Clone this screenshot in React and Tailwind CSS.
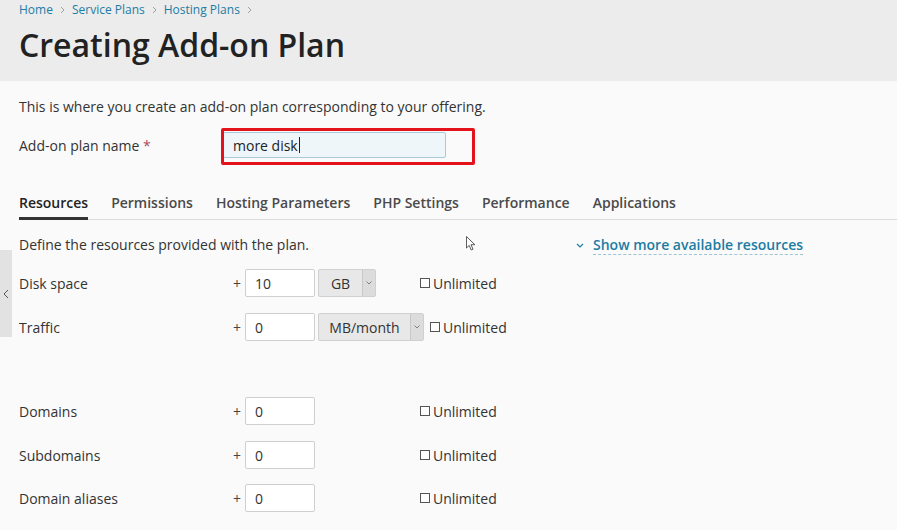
import React from "react";

const font = { fontFamily: '"Open Sans", "Liberation Sans", sans-serif' };

const Unlimited = () => (
  <label className="flex items-center gap-[3px] text-[14px] text-[#333]">
    <span className="inline-block w-[10px] h-[10px] border border-[#555] bg-white" />
    Unlimited
  </label>
);

const Select = ({ value, width }) => (
  <div className={`flex h-[28px] ${width} border border-[#d0d0d0] rounded-[2px] bg-[#e8e8e8]`}>
    <div className="flex-1 flex items-center justify-center text-[14px] text-[#333]">{value}</div>
    <div className="w-[13px] flex items-center justify-center border-l border-[#c8c8c8] bg-[#dcdcdc]">
      <svg width="6" height="4" viewBox="0 0 6 4">
        <path d="M0.5 0.5 L3 3 L5.5 0.5" fill="none" stroke="#777" strokeWidth="0.9" />
      </svg>
    </div>
  </div>
);

const Row = ({ label, value, select, className = "" }) => (
  <div className={`flex items-center h-[28px] ${className}`}>
    <div className="w-[214px] text-[14px] text-[#333]">{label}</div>
    <div className="flex items-center min-w-[181px]">
      <span className="w-[12px] text-[14px] text-[#444]">+</span>
      <div className="w-[70px] h-[28px] bg-white border border-[#cfcfcf] rounded-[2px] flex items-center pl-[9px] text-[14px] text-[#333]">
        {value}
      </div>
      {select && <div className="ml-[3px]">{select}</div>}
    </div>
    <div className="ml-[6px]">
      <Unlimited />
    </div>
  </div>
);

const tabs = ["Resources", "Permissions", "Hosting Parameters", "PHP Settings", "Performance", "Applications"];

const Sep = () => (
  <svg width="5" height="8" viewBox="0 0 5 8" className="mx-[7px]">
    <path d="M1 1 L4 4 L1 7" fill="none" stroke="#999" strokeWidth="0.9" />
  </svg>
);

export default function App() {
  return (
    <div style={font} className="relative w-[897px] h-[530px] overflow-hidden bg-[#fafafa]">
      <header className="h-[81px] bg-[#ececec] px-[19px] pt-[1px]">
        <nav className="flex items-center text-[12px] text-[#1d7ca3] leading-[18px]">
          <span>Home</span>
          <Sep />
          <span>Service Plans</span>
          <Sep />
          <span>Hosting Plans</span>
          <Sep />
        </nav>
        <h1 className="mt-[7px] text-[32px] leading-[38px] font-semibold text-[#222]">Creating Add-on Plan</h1>
      </header>

      <main className="px-[19px]">
        <p className="mt-[16px] text-[14px] leading-[20px] text-[#333]">
          This is where you create an add-on plan corresponding to your offering.
        </p>

        <div className="mt-[15px] flex items-center h-[26px]">
          <div className="w-[204px] text-[14px] text-[#333]">
            Add-on plan name <span className="text-[#b0495a]">*</span>
          </div>
          <div className="relative">
            <div className="w-[223px] h-[26px] bg-[#eef6fa] border border-[#a9cad8] rounded-[2px] flex items-center pl-[9px] text-[14px] text-[#222]">
              more disk<span className="inline-block w-[1px] h-[16px] bg-[#222] ml-[1px]" />
            </div>
            <div className="absolute -left-[2px] -top-[4px] w-[254px] h-[37px] border-[3px] border-[#e3121b] rounded-[2px]" />
          </div>
        </div>

        <div className="mt-[35px] -mr-[19px] flex gap-[23px] border-b border-[#dcdcdc] text-[14px] leading-[20px]">
          {tabs.map((t, i) => (
            <div
              key={t}
              className={`pb-[4px] border-b-[3px] -mb-px font-semibold ${
                i === 0 ? "border-[#333] text-[#222]" : "border-transparent text-[#4a4a4a]"
              }`}
            >
              {t}
            </div>
          ))}
        </div>

        <div className="mt-[15px] flex items-center text-[14px] leading-[20px]">
          <span className="text-[#333] w-[557px]">Define the resources provided with the plan.</span>
          <svg width="8" height="5" viewBox="0 0 8 5" className="mr-[9px]">
            <path d="M1 1 L4 4 L7 1" fill="none" stroke="#1d7ca3" strokeWidth="1.2" />
          </svg>
          <span className="text-[#1d7ca3] font-semibold border-b border-dashed border-[#9cc4d4] leading-[18px]">
            Show more available resources
          </span>
        </div>

        <div className="mt-[14px]">
          <Row label="Disk space" value="10" select={<Select value="GB" width="w-[58px]" />} />
          <Row label="Traffic" value="0" select={<Select value="MB/month" width="w-[106px]" />} className="mt-[16px]" />
          <Row label="Domains" value="0" className="mt-[56px]" />
          <Row label="Subdomains" value="0" className="mt-[16px]" />
          <Row label="Domain aliases" value="0" className="mt-[15px]" />
        </div>
      </main>

      <div className="absolute left-0 top-[250px] w-[12px] h-[87px] bg-[#e2e2e2] flex items-center justify-center">
        <svg width="6" height="10" viewBox="0 0 6 10">
          <path d="M5 1 L1 5 L5 9" fill="none" stroke="#555" strokeWidth="1" />
        </svg>
      </div>

      <svg className="absolute left-[466px] top-[236px]" width="10" height="15" viewBox="0 0 10 15">
        <path d="M0.5 0.5 L0.5 12 L3.2 9.4 L5.2 14 L7 13.2 L5 8.7 L8.8 8.7 Z" fill="white" stroke="#333" strokeWidth="0.8" />
      </svg>
    </div>
  );
}
